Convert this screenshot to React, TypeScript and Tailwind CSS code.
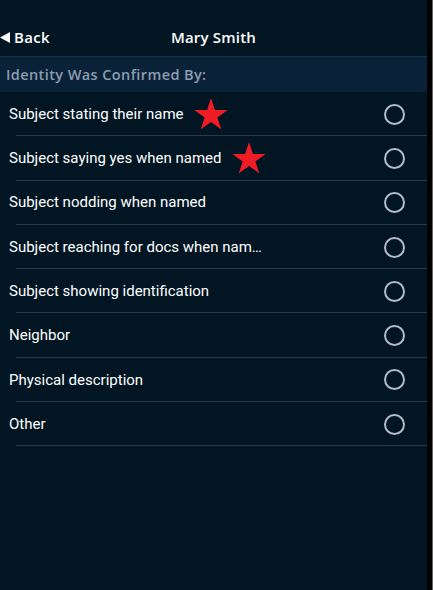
import { memo } from "react";

const options = [
  { label: "Subject stating their name", star: true },
  { label: "Subject saying yes when named", star: true },
  { label: "Subject nodding when named", star: false },
  { label: "Subject reaching for docs when named", star: false },
  { label: "Subject showing identification", star: false },
  { label: "Neighbor", star: false },
  { label: "Physical description", star: false },
  { label: "Other", star: false },
];

const Star = () => (
  <svg width="34" height="32" viewBox="0 0 24 23" className="ml-[10px] -mt-[1px] flex-shrink-0">
    <path d="M12 0l2.83 8.6H24l-7.4 5.35 2.83 8.65L12 17.25 4.57 22.6 7.4 13.95 0 8.6h9.17z" fill="#ee1c25" />
  </svg>
);

const IdentityForm = () => {
  return (
    <div className="flex w-[433px] h-[590px] bg-black">
      <div className="flex flex-col w-[427px] h-full bg-[#021522]" style={{ fontFamily: "Roboto, sans-serif" }}>
        {/* Header */}
        <div
          className="relative flex items-center justify-center h-[57px] pt-[18px] border-b border-[#17304a]"
          style={{ fontFamily: "'Open Sans', sans-serif" }}
        >
          <div className="absolute left-0 top-[18px] bottom-0 flex items-center text-white text-[15px] font-semibold tracking-[0.3px]">
            <svg width="10" height="11" viewBox="0 0 10 11" className="mr-[4px]">
              <polygon points="10,0 10,11 0,5.5" fill="#fff" />
            </svg>
            Back
          </div>
          <span className="text-white text-[15px] font-semibold tracking-[0.2px]">Mary Smith</span>
        </div>

        {/* Section band */}
        <div
          className="flex items-center h-[35px] px-[6px] bg-[#0a2238] text-[#8d9cb0] text-[14.5px] font-semibold tracking-[0.4px]"
          style={{ fontFamily: "'Open Sans', sans-serif" }}
        >
          Identity Was Confirmed By:
        </div>

        {/* Options */}
        <div className="flex flex-col">
          {options.map((o, i) => (
            <div key={i} className="relative flex items-center h-[44.3px] pl-[9px] pr-[22px]">
              <div className="flex flex-1 items-center min-w-0 text-white text-[15px]">
                <span className="truncate max-w-[255px]">{o.label}</span>
                {o.star && <Star />}
              </div>
              <div className="w-[21px] h-[21px] rounded-full border-2 border-[#b3bcc7] flex-shrink-0" />
              <div className="absolute left-[16px] right-0 bottom-0 h-px bg-[#2a3a4a]" />
            </div>
          ))}
        </div>
      </div>
      <div className="w-[5px] h-full" />
      <div className="w-px h-full bg-[#666]" />
    </div>
  );
};

export default memo(IdentityForm);
